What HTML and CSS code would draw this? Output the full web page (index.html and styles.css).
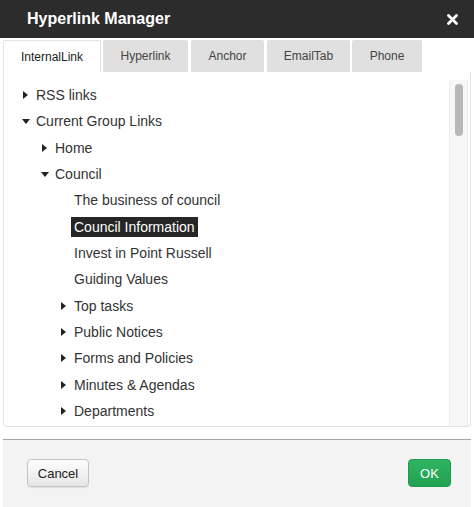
FILE: index.html
```html
<!DOCTYPE html>
<html lang="en">
<head>
    <meta charset="UTF-8">
    <title>Hyperlink Manager</title>
    <link rel="stylesheet" href="styles.css">
</head>
<body>
    <div class="dialog">
        <div class="titlebar">
            <h2>Hyperlink Manager</h2>
            <span class="close">
                <svg width="11" height="11" viewBox="0 0 11 11">
                    <path d="M1.5 1.5 L9.5 9.5 M9.5 1.5 L1.5 9.5" stroke="#fff" stroke-width="2.8" stroke-linecap="round"/>
                </svg>
            </span>
        </div>

        <div class="tabs">
            <div class="tab active tab-internal">InternalLink</div>
            <div class="tab tab-hyperlink">Hyperlink</div>
            <div class="tab tab-anchor">Anchor</div>
            <div class="tab tab-email">EmailTab</div>
            <div class="tab tab-phone">Phone</div>
        </div>

        <div class="panel">
            <ul class="tree">
                <li class="node closed lvl0"><span class="arrow"></span>RSS links</li>
                <li class="node open lvl0"><span class="arrow"></span>Current Group Links</li>
                <li class="node closed lvl1"><span class="arrow"></span>Home</li>
                <li class="node open lvl1"><span class="arrow"></span>Council</li>
                <li class="node leaf lvl2"><span class="label">The business of council</span></li>
                <li class="node leaf lvl2"><span class="label selected">Council Information</span></li>
                <li class="node leaf lvl2"><span class="label">Invest in Point Russell</span></li>
                <li class="node leaf lvl2"><span class="label">Guiding Values</span></li>
                <li class="node closed lvl2"><span class="arrow"></span>Top tasks</li>
                <li class="node closed lvl2"><span class="arrow"></span>Public Notices</li>
                <li class="node closed lvl2"><span class="arrow"></span>Forms and Policies</li>
                <li class="node closed lvl2"><span class="arrow"></span>Minutes &amp; Agendas</li>
                <li class="node closed lvl2"><span class="arrow"></span>Departments</li>
            </ul>
            <div class="scrollbar">
                <div class="thumb"></div>
            </div>
        </div>

        <div class="footer">
            <button class="btn btn-cancel">Cancel</button>
            <button class="btn btn-ok">OK</button>
        </div>
    </div>
</body>
</html>
```

FILE: styles.css
```css
* {
    box-sizing: border-box;
}
body {
    margin: 0;
    font-family: "Liberation Sans", Arial, sans-serif;
    background: #fff;
}
.dialog {
    width: 474px;
    height: 507px;
    display: flex;
    flex-direction: column;
    background: #fff;
    overflow: hidden;
}

/* title bar */
.titlebar {
    height: 38px;
    flex: none;
    background: #2c2c2c;
    display: flex;
    align-items: center;
    justify-content: space-between;
    padding: 0 16px 0 27px;
}
.titlebar h2 {
    margin: 0;
    color: #fff;
    font-size: 16px;
    font-weight: bold;
}
.close {
    display: flex;
}

/* tabs */
.tabs {
    display: flex;
    gap: 2px;
    margin-top: 2px;
    padding-left: 3px;
    height: 32px;
    flex: none;
}
.tab {
    background: #e0e0e0;
    color: #444;
    font-size: 12px;
    display: flex;
    align-items: center;
    justify-content: center;
    border-radius: 2px 2px 0 0;
}
.tab.active {
    background: #fff;
    color: #222;
    border: 1px solid #e2e2e2;
    border-bottom: none;
}
.tab-internal { width: 98px; }
.tab-hyperlink { width: 85px; }
.tab-anchor { width: 73px; margin-left: 1px; }
.tab-email { width: 83px; margin-left: 1px; }
.tab-phone { width: 70px; }

/* tree panel */
.panel {
    margin: 0 3px;
    height: 355px;
    flex: none;
    border: 1px solid #e2e2e2;
    border-top: none;
    border-radius: 0 0 4px 4px;
    display: flex;
    overflow: hidden;
}
.tree {
    list-style: none;
    margin: 0;
    padding: 10px 0 0 0;
    flex: 1;
}
.node {
    height: 26.33px;
    display: flex;
    align-items: center;
    font-size: 14px;
    color: #333;
    white-space: nowrap;
}
.lvl0 { padding-left: 17px; }
.lvl1 { padding-left: 36px; }
.lvl2 { padding-left: 55px; }
.leaf .label {
    margin-left: 12px;
    padding: 2px 3px;
}
.label.selected {
    background: #262626;
    color: #fff;
}
.arrow {
    width: 9px;
    margin-right: 6px;
    display: flex;
    justify-content: center;
}
.closed .arrow::before {
    content: "";
    border-left: 5px solid #222;
    border-top: 4px solid transparent;
    border-bottom: 4px solid transparent;
}
.open .arrow::before {
    content: "";
    border-top: 5px solid #222;
    border-left: 4px solid transparent;
    border-right: 4px solid transparent;
}
.scrollbar {
    width: 19px;
    flex: none;
    margin: 8px 2px 0 0;
    background: #f7f7f7;
    border-left: 1px solid #ececec;
    border-right: 1px solid #ececec;
    padding-top: 4px;
}
.thumb {
    width: 8px;
    height: 52px;
    margin: 0 auto;
    background: #b8b8b8;
    border-radius: 4px;
}

/* footer */
.footer {
    flex: 1;
    margin: 12px 3px 0 3px;
    border-top: 1px solid #a4a4a4;
    background: #f3f3f3;
    display: flex;
    justify-content: space-between;
    align-items: flex-start;
    padding: 19px 20px 0 24px;
}
.btn {
    font-family: "Liberation Sans", Arial, sans-serif;
    font-size: 13px;
    height: 28px;
    border-radius: 4px;
    cursor: pointer;
}
.btn-cancel {
    width: 62px;
    color: #222;
    background: linear-gradient(#fdfdfd, #e6e6e6);
    border: 1px solid #c4c4c4;
    box-shadow: 0 1px 1px rgba(0, 0, 0, 0.08);
}
.btn-ok {
    width: 43px;
    color: #fff;
    background: linear-gradient(#2fb463, #22a052);
    border: 1px solid #1f9a4d;
}
```
